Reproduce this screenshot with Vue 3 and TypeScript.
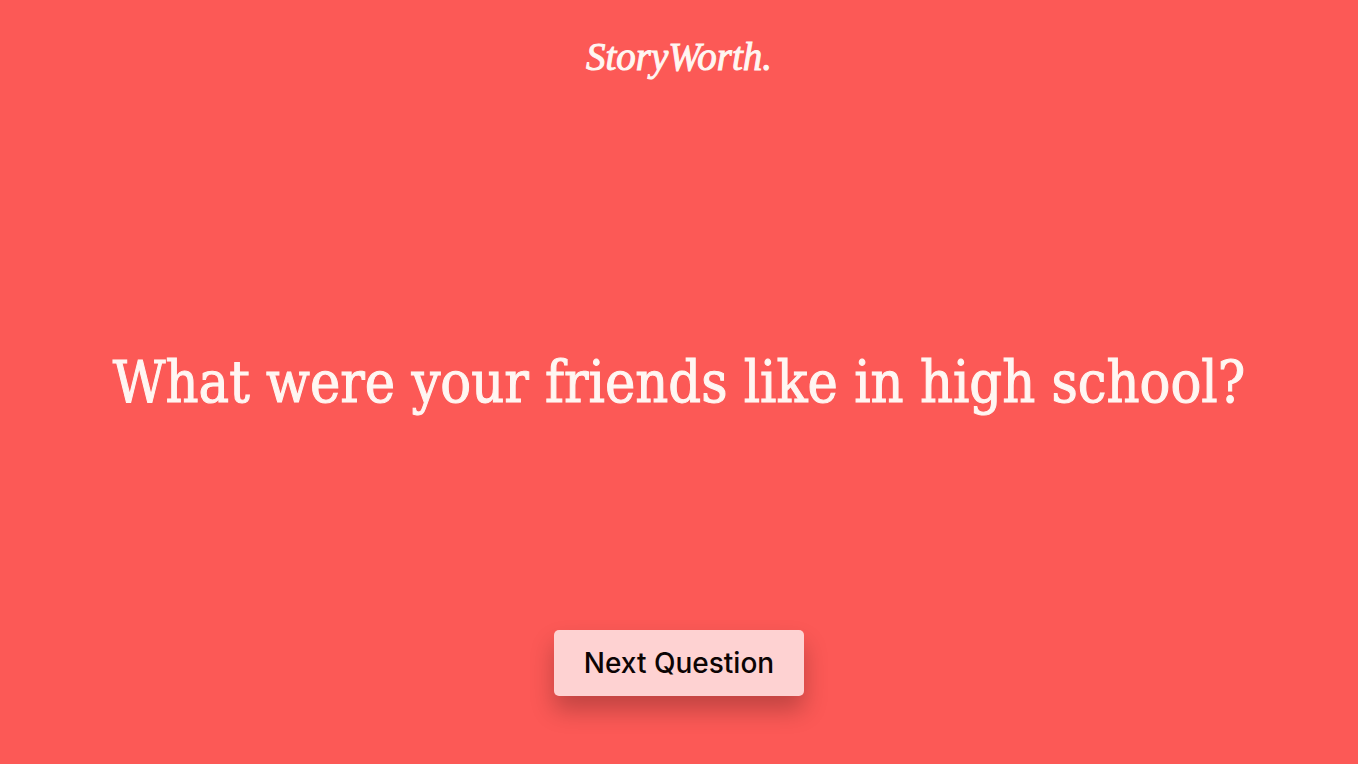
<script setup lang="ts">
import { ref } from 'vue'

const questions: string[] = ['What were your friends like in high school?']
const index = ref(0)

function next(): void {
  index.value = (index.value + 1) % questions.length
}
</script>

<template>
  <main class="screen">
    <header class="brand">StoryWorth.</header>
    <h1 class="question">{{ questions[index] }}</h1>
    <button class="next" type="button" @click="next">Next Question</button>
  </main>
</template>

<style>
body {
  margin: 0;
  background: #fc5956;
}
</style>

<style scoped>
.screen {
  box-sizing: border-box;
  min-height: 100vh;
  padding: 36px 24px;
  display: grid;
  grid-template-rows: 1fr auto 1fr;
  justify-items: center;
  background: #fc5956;
  color: #fff6f2;
}
.brand {
  font: italic 39px/42px "Liberation Serif", serif;
  -webkit-text-stroke: 1px currentColor;
}
.question {
  margin: 0;
  font: 400 57px/72px "DejaVu Serif Condensed", "DejaVu Serif", serif;
  text-align: center;
  -webkit-text-stroke: 1px currentColor;
}
.next {
  align-self: end;
  margin-bottom: 32px;
  border: 0;
  border-radius: 5px;
  padding: 14px 30px;
  background: #fed2d2;
  color: #0c0404;
  font: 500 28px/38px Inter, sans-serif;
  box-shadow: 0 14px 24px rgba(0, 0, 0, 0.24);
  cursor: pointer;
}
</style>
